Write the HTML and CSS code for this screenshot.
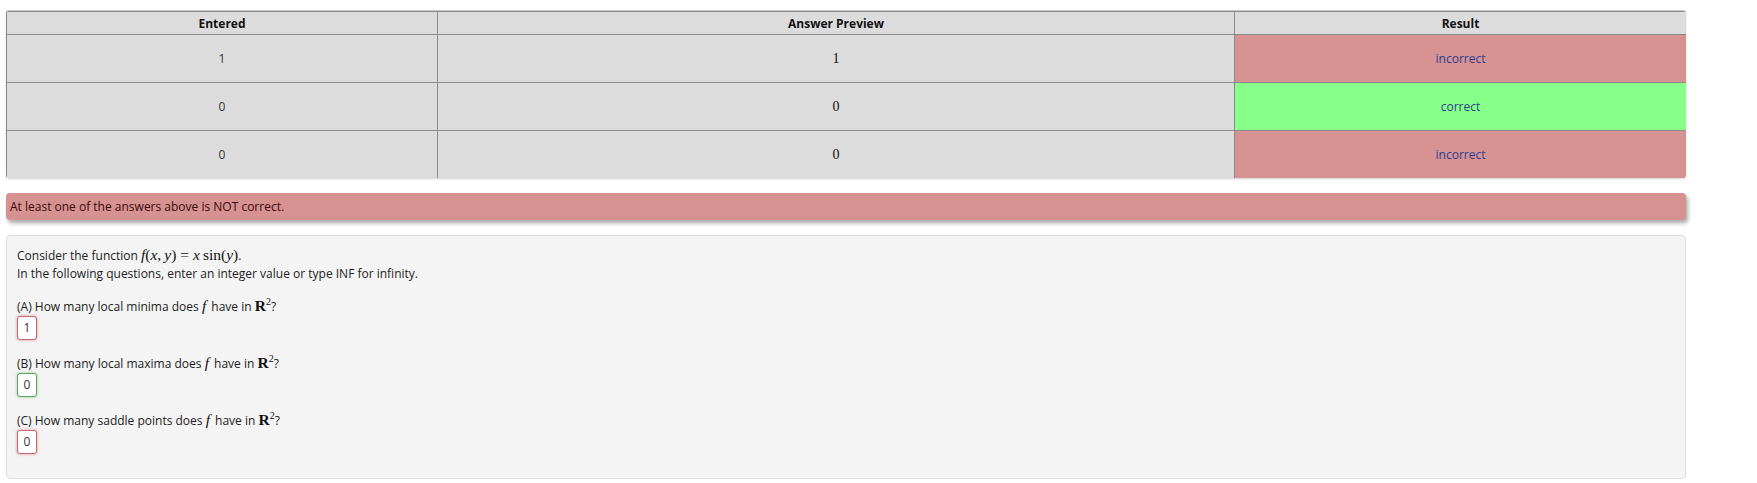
FILE: index.html
```html
<!DOCTYPE html>
<html>
<head>
<meta charset="utf-8">
<link rel="stylesheet" href="styles.css">
</head>
<body>
<div class="page">
  <div class="table-wrap">
    <table class="results">
      <thead>
        <tr><th class="c1">Entered</th><th class="c2">Answer Preview</th><th class="c3">Result</th></tr>
      </thead>
      <tbody>
        <tr><td>1</td><td class="preview">1</td><td class="res bad">incorrect</td></tr>
        <tr><td>0</td><td class="preview">0</td><td class="res good">correct</td></tr>
        <tr><td>0</td><td class="preview">0</td><td class="res bad">incorrect</td></tr>
      </tbody>
    </table>
  </div>

  <div class="alert">At least one of the answers above is NOT correct.</div>

  <div class="problem">
    <p class="intro">Consider the function <span class="math"><i>f</i>(<i>x</i>,&#8201;<i>y</i>)&#8197;=&#8197;<i>x</i>&#8201;sin(<i>y</i>)</span>.<br>In the following questions, enter an integer value or type INF for infinity.</p>
    <div class="q">
      <div class="qtext">(A) How many local minima does <span class="math"><i class="fn">f</i></span> have in <span class="math"><b>R</b><sup>2</sup></span>?</div>
      <div class="ans wrong">1</div>
    </div>
    <div class="q">
      <div class="qtext">(B) How many local maxima does <span class="math"><i class="fn">f</i></span> have in <span class="math"><b>R</b><sup>2</sup></span>?</div>
      <div class="ans right">0</div>
    </div>
    <div class="q last">
      <div class="qtext">(C) How many saddle points does <span class="math"><i class="fn">f</i></span> have in <span class="math"><b>R</b><sup>2</sup></span>?</div>
      <div class="ans wrong">0</div>
    </div>
  </div>
</div>
</body>
</html>
```

FILE: styles.css
```css
html, body {
  margin: 0;
  padding: 0;
  background: #ffffff;
}

body {
  font-family: "Open Sans", "Noto Sans", sans-serif;
  font-size: 12px;
  color: #222;
}

.page {
  width: 1680px;
  padding: 10px 0 0 6px;
}

.table-wrap {
  border-radius: 3px;
  overflow: hidden;
  box-shadow: 0 1px 2px rgba(0, 0, 0, 0.18);
  border-top: 1px solid #c8c8c8;
}

.results {
  width: 100%;
  border-collapse: collapse;
  table-layout: fixed;
  background: #dcdcdc;
}

.results th,
.results td {
  border: 1px solid #8a8a8a;
  text-align: center;
  padding: 0;
}

.results tr > *:first-child { border-left: 1px solid #8a8a8a; }
.results tr > *:last-child { border-right: none; }
.results tbody tr:last-child td { border-bottom: none; }

.results th {
  height: 22px;
  font-weight: 700;
  color: #111;
}

.results .c1 { width: 430px; }
.results .c2 { width: 796px; }

.results td {
  height: 47px;
  color: #333;
}

.results td.preview {
  font-family: "Liberation Serif", "DejaVu Serif", serif;
  font-size: 14px;
  color: #111;
}

.results td.res {
  color: #2a3f93;
  border-top-color: #cfcfcf;
}

.results td.bad { background: #d69191; }
.results td.good { background: #88ff88; }

.alert {
  margin-top: 15px;
  height: 27px;
  line-height: 27px;
  padding-left: 4px;
  background: #d69191;
  color: #3a0a0a;
  border-radius: 4px;
  box-shadow: 2px 3px 4px rgba(0, 0, 0, 0.35);
}

.problem {
  margin-top: 15px;
  background: #f4f4f4;
  border: 1px solid #dedede;
  border-radius: 4px;
  padding: 11px 10px 24px;
  line-height: 18px;
}

.intro {
  margin: 0 0 15px;
}

.math {
  font-family: "Liberation Serif", "DejaVu Serif", serif;
  font-size: 15.5px;
  line-height: 14px;
  color: #111;
}

.math .fn {
  margin-right: 2px;
}

.math sup {
  font-size: 10px;
  vertical-align: 6px;
  line-height: 0;
}

.q {
  margin-bottom: 15px;
}

.q.last {
  margin-bottom: 0;
}

.ans {
  width: 18px;
  height: 22px;
  line-height: 22px;
  text-align: center;
  background: #fff;
  border-radius: 3px;
  font-size: 12px;
  color: #333;
}

.ans.wrong {
  border: 1px solid #c96a6a;
  box-shadow: 0 0 3px rgba(200, 60, 60, 0.55);
}

.ans.right {
  border: 1px solid #5aa65a;
  box-shadow: 0 0 3px rgba(60, 160, 60, 0.5);
}
```
